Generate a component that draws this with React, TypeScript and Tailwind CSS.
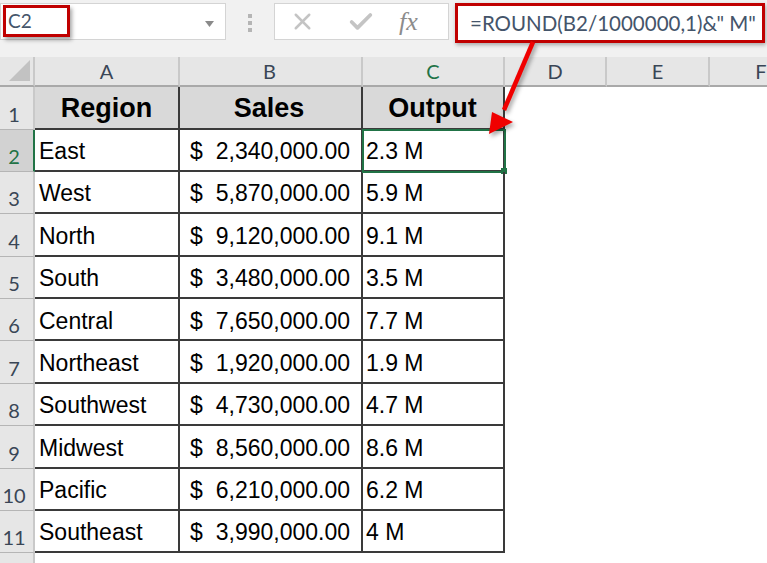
import { Check, X } from 'lucide-react';

const rows = [
  { n: 2, region: 'East', sales: '2,340,000.00', output: '2.3 M' },
  { n: 3, region: 'West', sales: '5,870,000.00', output: '5.9 M' },
  { n: 4, region: 'North', sales: '9,120,000.00', output: '9.1 M' },
  { n: 5, region: 'South', sales: '3,480,000.00', output: '3.5 M' },
  { n: 6, region: 'Central', sales: '7,650,000.00', output: '7.7 M' },
  { n: 7, region: 'Northeast', sales: '1,920,000.00', output: '1.9 M' },
  { n: 8, region: 'Southwest', sales: '4,730,000.00', output: '4.7 M' },
  { n: 9, region: 'Midwest', sales: '8,560,000.00', output: '8.6 M' },
  { n: 10, region: 'Pacific', sales: '6,210,000.00', output: '6.2 M' },
  { n: 11, region: 'Southeast', sales: '3,990,000.00', output: '4 M' },
];

const uiFont = "font-['Lato','Open_Sans',sans-serif]";
const cellFont = "font-['Liberation_Sans',Arial,sans-serif]";

function Toolbar() {
  return (
    <div className="flex h-[57px] pt-[3px] bg-[#f1f1f1]">
      <div className="flex h-[37px] w-[226px] items-start border border-[#d4d4d4] bg-white pt-px pl-[2px]">
        <div className={`flex h-[32px] w-[67px] items-center border-[3px] border-[#c00000] pl-[2px] text-[19px] text-[#44546a] shadow-[2px_3px_4px_rgba(0,0,0,0.35)] ${uiFont}`}>
          C2
        </div>
        <svg className="ml-[134px] mt-[16px]" width="12" height="7" viewBox="0 0 12 7">
          <path d="M1 0h9L5.500 6z" fill="#8a8a8a" />
        </svg>
      </div>
      <div className="flex w-[48px] flex-col items-center gap-[3px] pt-[11px]">
        <span className="h-[4px] w-[4px] bg-[#b5b5b5]" />
        <span className="h-[4px] w-[4px] bg-[#b5b5b5]" />
        <span className="h-[4px] w-[4px] bg-[#b5b5b5]" />
      </div>
      <div className="flex h-[37px] w-[175px] items-center border border-[#d4d4d4] bg-white pl-[14px]">
        <X size={27} strokeWidth={2.200} className="text-[#c4c4c4]" />
        <Check size={28} strokeWidth={3.200} className="ml-[31px] text-[#c4c4c4]" />
        <span className="ml-[24px] font-['Liberation_Serif',serif] text-[26px] italic text-[#8c8c8c]">
          fx
        </span>
      </div>
      <div className={`ml-[6px] flex h-[40px] w-[310px] items-center border-[3px] border-[#c00000] bg-white pl-[12px] text-[20.500px] whitespace-nowrap text-[#44546a] shadow-[1px_2px_4px_rgba(0,0,0,0.3)] ${uiFont}`}>
        =ROUND(B2/1000000,1)&amp;" M"
      </div>
    </div>
  );
}

function ColumnHeaders() {
  const base = `flex shrink-0 items-center justify-center border-r-2 border-[#c9c9c9] border-b-2 border-b-[#a9a9a9] bg-[#e6e6e6] pb-[1px] text-[20px] text-[#3a4656] ${uiFont}`;
  return (
    <div className="flex h-[30px] overflow-hidden">
      <div className="flex w-[35px] shrink-0 items-end justify-end border-r-2 border-[#c9c9c9] border-b-2 border-b-[#a9a9a9] bg-[#e6e6e6] p-[3px] pb-[4px]">
        <svg width="21" height="21" viewBox="0 0 21 21">
          <path d="M21 0v21H0z" fill="#c2c2c2" />
        </svg>
      </div>
      <div className={`${base} w-[145px]`}>A</div>
      <div className={`${base} w-[183px] pr-[2px]`}>B</div>
      <div className={`${base} w-[142px] border-b-[#217346] bg-[#d2d2d2] text-[#217346]`}>C</div>
      <div className={`${base} w-[102px]`}>D</div>
      <div className={`${base} w-[103px]`}>E</div>
      <div className={`${base} w-[104px] border-r-0`}>F</div>
    </div>
  );
}

function RowNumber({ n, active }: { n: number; active?: boolean }) {
  return (
    <div
      className={`flex h-full w-[35px] shrink-0 items-end justify-center border-r-2 border-b border-b-[#b5b5b5] pr-[5px] text-[20px] leading-[29px] ${uiFont} ${
        active
          ? 'border-r-[#217346] bg-[#d2d2d2] text-[#217346]'
          : 'border-r-[#c9c9c9] bg-[#e6e6e6] text-[#3a4656]'
      }`}
    >
      {n}
    </div>
  );
}

function TitleRow() {
  const head = `flex items-center justify-center border-r-2 border-b-2 border-[#3a3a3a] bg-[#d9d9d9] pt-[2px] text-[27px] font-bold text-black ${cellFont}`;
  return (
    <div className="flex h-[42.500px]">
      <RowNumber n={1} />
      <div className={`${head} w-[145px]`}>Region</div>
      <div className={`${head} w-[183px] pr-[3px]`}>Sales</div>
      <div className={`${head} w-[142px] pr-[1px]`}>Output</div>
    </div>
  );
}

function DataRow({ n, region, sales, output }: (typeof rows)[number]) {
  const active = n === 2;
  const cell = `flex h-full items-center border-r-2 border-b-2 border-[#3a3a3a] pt-[3px] text-[23px] text-black ${cellFont}`;
  return (
    <div className="flex h-[42.400px]">
      <RowNumber n={n} active={active} />
      <div className={`${cell} w-[145px] pl-[4px]`}>{region}</div>
      <div className={`${cell} w-[183px] justify-between pr-[11px] pl-[10px]`}>
        <span>$</span>
        <span>{sales}</span>
      </div>
      <div className={`${cell} relative w-[142px] pl-[3px] ${active ? 'outline-2 -outline-offset-1 outline-[#217346]' : ''}`}>
        {output}
        {active && (
          <span className="absolute -right-[4px] -bottom-[4px] h-[6px] w-[6px] bg-[#217346]" />
        )}
      </div>
    </div>
  );
}

export default function App() {
  return (
    <div className="relative h-[563px] w-[767px] overflow-hidden bg-white">
      <Toolbar />
      <ColumnHeaders />
      <TitleRow />
      {rows.map((row) => (
        <DataRow key={row.n} {...row} />
      ))}
      <div className="h-[10px] w-[35px] border-r-2 border-[#c9c9c9] bg-[#e6e6e6]" />
      <svg
        className="absolute top-0 left-0 drop-shadow-[2px_3px_2px_rgba(0,0,0,0.35)]"
        width="767"
        height="563"
        viewBox="0 0 767 563"
      >
        <path d="M533 42 504 110" stroke="#f00000" strokeWidth="4.500" fill="none" />
        <path d="M489 134 492 112 513 122z" fill="#f00000" />
      </svg>
    </div>
  );
}
